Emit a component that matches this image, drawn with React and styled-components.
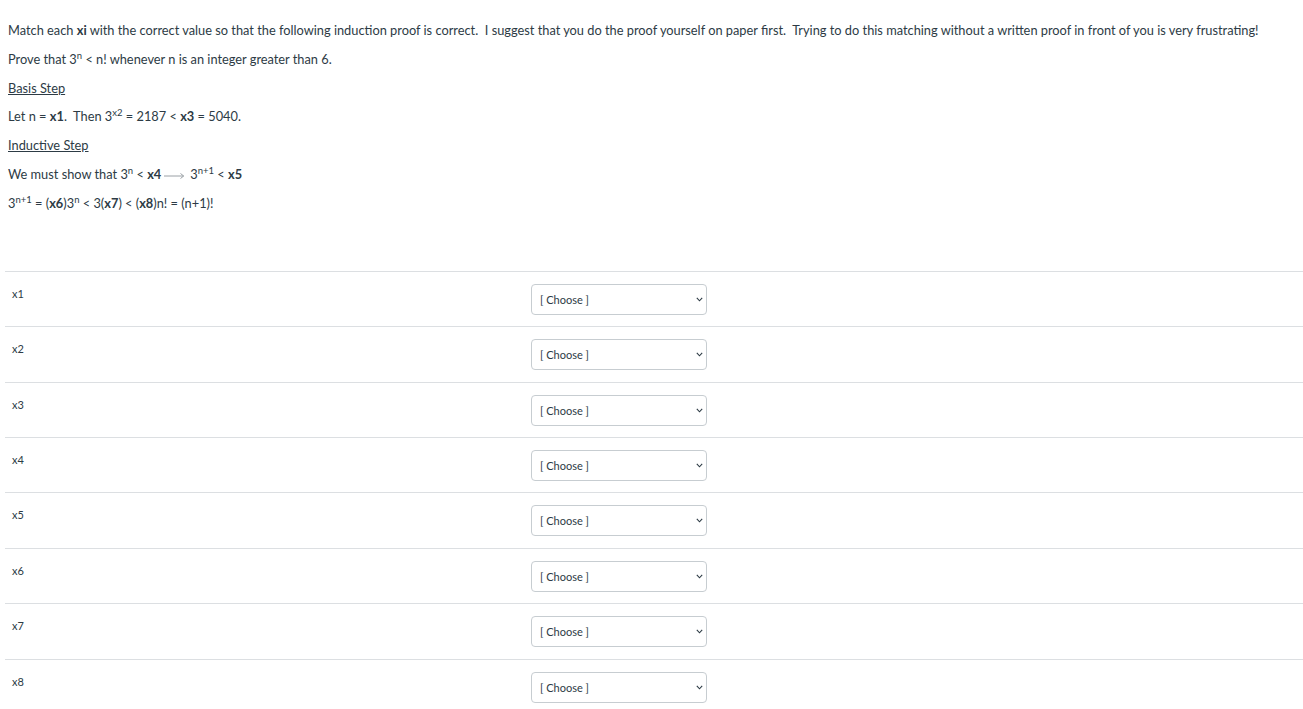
import React from 'react'
import styled, { createGlobalStyle } from 'styled-components'

const GlobalStyle = createGlobalStyle`
  html, body {
    margin: 0;
    padding: 0;
    background: #fff;
  }
  body {
    font-family: Lato, "Helvetica Neue", Arial, sans-serif;
    color: #2d3b45;
  }
`

const Page = styled.div`
  padding: 21px 0 0 8px;
`

const Para = styled.p`
  margin: 0 0 10.8px 0;
  font-size: 12.8px;
  line-height: 18px;

  &:last-of-type {
    margin-bottom: 0;
  }
`

const Heading = styled.span`
  text-decoration: underline;
`

const Sup = styled.sup`
  font-size: 9.5px;
  line-height: 0;
  vertical-align: 5px;
`

const Arrow = styled.svg`
  vertical-align: middle;
  margin: 0 5px 0 3px;
`

const Table = styled.div`
  margin: 59px 0 0 -3px;
`

const Row = styled.div`
  display: grid;
  grid-template-columns: 526px 176px;
  align-items: start;
  height: 55.43px;
  box-sizing: border-box;
  border-top: 1px solid #dcdfe2;
`

const Label = styled.div`
  padding: 14px 0 0 7px;
  font-size: 11px;
  line-height: 16px;
`

const SelectWrap = styled.div`
  position: relative;
  margin-top: 12px;
`

const Select = styled.select`
  appearance: none;
  width: 176px;
  height: 31px;
  box-sizing: border-box;
  border: 1px solid #c7cdd1;
  border-radius: 4px;
  background: #fff;
  padding: 0 20px 0 8px;
  font-family: Lato, "Helvetica Neue", Arial, sans-serif;
  font-size: 11px;
  color: #2d3b45;
  white-space: pre;
`

const Chevron = styled.svg`
  position: absolute;
  right: 4px;
  top: 13px;
  pointer-events: none;
`

const rows = ['x1', 'x2', 'x3', 'x4', 'x5', 'x6', 'x7', 'x8']

const App = () => {
  return (
    <Page>
      <GlobalStyle />
      <Para>
        Match each <b>xi</b> with the correct value so that the following induction proof is
        correct.&nbsp; I suggest that you do the proof yourself on paper first.&nbsp; Trying to do
        this matching without a written proof in front of you is very frustrating!
      </Para>
      <Para>
        Prove that 3<Sup>n</Sup> &lt; n! whenever n is an integer greater than 6.
      </Para>
      <Para>
        <Heading>Basis Step</Heading>
      </Para>
      <Para>
        Let n = <b>x1</b>.&nbsp; Then 3<Sup>x2</Sup> = 2187 &lt; <b>x3</b> = 5040.
      </Para>
      <Para>
        <Heading>Inductive Step</Heading>
      </Para>
      <Para>
        We must show that 3<Sup>n</Sup> &lt; <b>x4</b>
        <Arrow width="21" height="8" viewBox="0 0 21 8">
          <path d="M0 4 H19.5" stroke="#9aa0a5" strokeWidth="1" fill="none" />
          <path d="M16.5 1.5 L19.7 4 L16.5 6.5" stroke="#9aa0a5" strokeWidth="1" fill="none" />
        </Arrow>
        3<Sup>n+1</Sup> &lt; <b>x5</b>
      </Para>
      <Para>
        3<Sup>n+1</Sup> = (<b>x6</b>)3<Sup>n</Sup> &lt; 3(<b>x7</b>) &lt; (<b>x8</b>)n! = (n+1)!
      </Para>

      <Table>
        {rows.map((r) => (
          <Row key={r}>
            <Label>{r}</Label>
            <SelectWrap>
              <Select defaultValue="">
                <option value="">[ Choose ]</option>
              </Select>
              <Chevron width="7" height="5" viewBox="0 0 7 5">
                <path d="M0.8 0.8 L3.5 3.8 L6.2 0.8" stroke="#2d3b45" strokeWidth="1.1" fill="none" />
              </Chevron>
            </SelectWrap>
          </Row>
        ))}
      </Table>
    </Page>
  )
}

export default App
